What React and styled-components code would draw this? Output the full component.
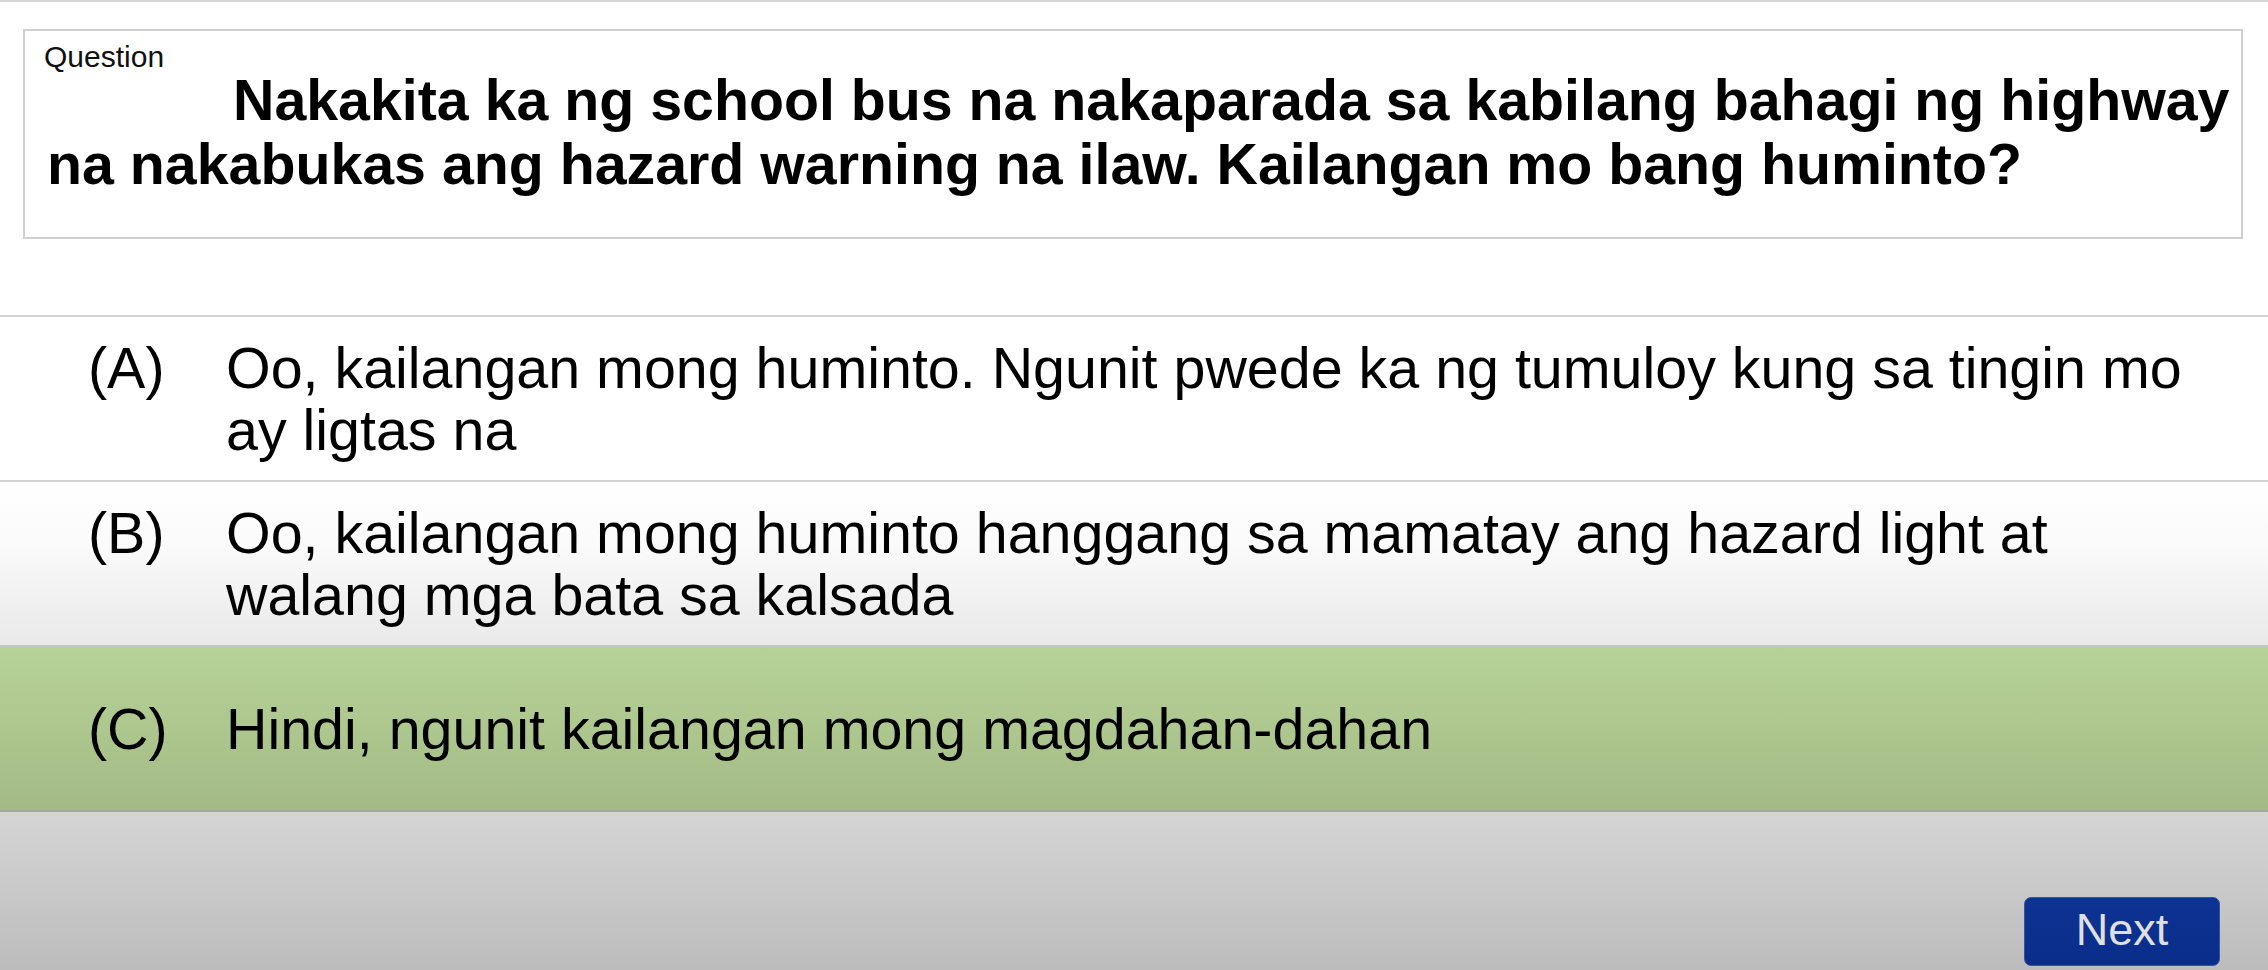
import React from 'react';
import styled, { createGlobalStyle, css } from 'styled-components';

const GlobalStyle = createGlobalStyle`
    html, body {
        margin: 0;
        padding: 0;
        background: #ffffff;
    }
    body {
        font-family: "Liberation Sans", Arial, sans-serif;
        color: #000;
    }
`;

const Page = styled.div`
    width: 100%;
    height: 970px;
    display: flex;
    flex-direction: column;
    overflow: hidden;
`;

const Header = styled.div`
    height: 317px;
    box-sizing: border-box;
    border-top: 2px solid #d6d6d6;
    border-bottom: 2px solid #d3d3d3;
    padding: 27px 25px 0 23px;
    background: #ffffff;
`;

const QuestionBox = styled.div`
    height: 210px;
    box-sizing: border-box;
    border: 2px solid #d0d0d0;
    padding: 15px 10px 0 19px;
`;

const QuestionLabel = styled.div`
    font-size: 30px;
    line-height: 22px;
    color: #111;
`;

const QuestionText = styled.div`
    font-size: 57.3px;
    font-weight: bold;
    line-height: 64px;
    padding-left: 3px;
`;

const QuestionLine = styled.div`
    white-space: nowrap;
    padding-left: ${(props) => (props.$first ? '186px' : '0')};
`;

const backgrounds = {
    plain: css`
        background: #ffffff;
        border-bottom-color: #d3d3d3;
    `,
    faded: css`
        background: linear-gradient(to bottom, #ffffff 0%, #fafafa 40%, #e9e9e9 100%);
        border-bottom-color: #c6c6c6;
    `,
    picked: css`
        background: linear-gradient(to bottom, #b7d299 0%, #adc78f 50%, #a3ba84 100%);
        border-bottom-color: #a5a8a5;
    `,
};

const OptionRow = styled.div`
    height: 165px;
    box-sizing: border-box;
    border-bottom: 2px solid #d3d3d3;
    display: grid;
    grid-template-columns: 138px 1fr;
    align-content: center;
    align-items: start;
    padding: 0 56px 0 88px;
    font-size: 57.4px;
    line-height: 62px;
    ${(props) => backgrounds[props.$tone || 'plain']};
`;

const OptionLetter = styled.span`
    white-space: nowrap;
`;

const OptionText = styled.span``;

const Footer = styled.div`
    flex: 1;
    display: flex;
    justify-content: flex-end;
    align-items: flex-end;
    padding: 0 48px 4px 0;
    background: linear-gradient(to bottom, #d5d5d5 0%, #c9c9c9 50%, #bcbcbc 100%);
`;

const NextButton = styled.button`
    width: 196px;
    height: 69px;
    box-sizing: border-box;
    border: 1px solid #3553a3;
    border-radius: 7px;
    background: linear-gradient(to bottom, #0d3393 0%, #0a2d8a 100%);
    color: #e0e0e0;
    font-family: "Liberation Sans", Arial, sans-serif;
    font-size: 45px;
    line-height: 1;
    padding: 0 0 4px;
    cursor: pointer;
`;

const questionLines = [
    'Nakakita ka ng school bus na nakaparada sa kabilang bahagi ng highway',
    'na nakabukas ang hazard warning na ilaw. Kailangan mo bang huminto?',
];

const options = [
    {
        letter: '(A)',
        text: 'Oo, kailangan mong huminto. Ngunit pwede ka ng tumuloy kung sa tingin mo ay ligtas na',
        tone: 'plain',
    },
    {
        letter: '(B)',
        text: 'Oo, kailangan mong huminto hanggang sa mamatay ang hazard light at walang mga bata sa kalsada',
        tone: 'faded',
    },
    {
        letter: '(C)',
        text: 'Hindi, ngunit kailangan mong magdahan-dahan',
        tone: 'picked',
    },
];

const App = () => {
    return (
        <>
            <GlobalStyle />
            <Page>
                <Header>
                    <QuestionBox>
                        <QuestionLabel>Question</QuestionLabel>
                        <QuestionText>
                            {questionLines.map((line, i) => (
                                <QuestionLine key={i} $first={i === 0}>
                                    {line}
                                </QuestionLine>
                            ))}
                        </QuestionText>
                    </QuestionBox>
                </Header>
                {options.map((opt) => (
                    <OptionRow key={opt.letter} $tone={opt.tone}>
                        <OptionLetter>{opt.letter}</OptionLetter>
                        <OptionText>{opt.text}</OptionText>
                    </OptionRow>
                ))}
                <Footer>
                    <NextButton>Next</NextButton>
                </Footer>
            </Page>
        </>
    );
};

export default App;
